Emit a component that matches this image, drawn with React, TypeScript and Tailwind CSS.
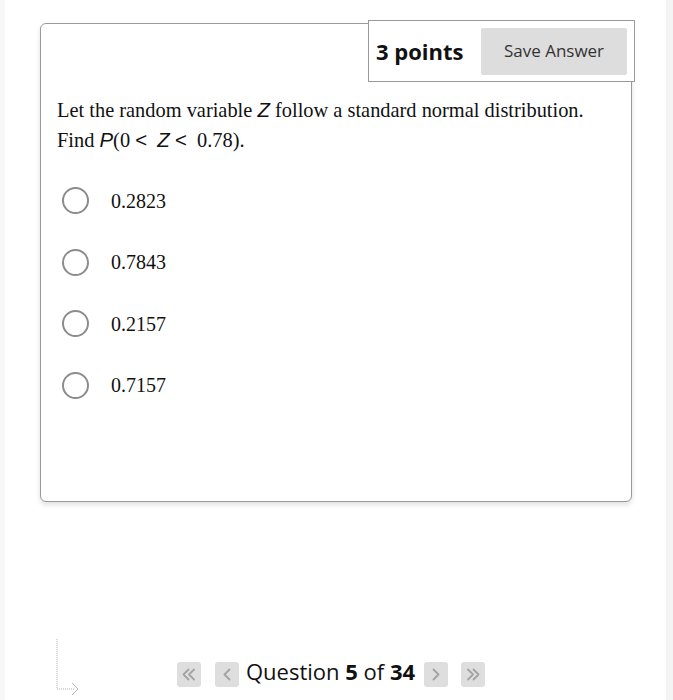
import React from "react";

const options = ["0.2823", "0.7843", "0.2157", "0.7157"];

const NavButton = ({ d }: { d: string }) => (
  <button className="flex h-[25px] w-[24px] items-center justify-center rounded-[3px] bg-[#dedede]">
    <svg width="24" height="25" viewBox="0 0 24 25">
      <path d={d} fill="none" stroke="#a3a3a3" strokeWidth="1.8" strokeLinecap="round" strokeLinejoin="round" />
    </svg>
  </button>
);

export default function App() {
  return (
    <div className="flex h-[700px] w-[673px] bg-white">
      <div className="w-[5px] bg-[#f8f8f8]" />
      <div className="relative flex w-[661px] flex-col">
        <div className="relative ml-[35px] mt-[23px] h-[479px] w-[592px] rounded-[6px] border border-[#9a9a9a] bg-white shadow-[0_3px_5px_rgba(0,0,0,0.12)]">
          <div className="absolute right-[-4px] top-[-4px] flex h-[62px] w-[267px] items-center border border-[#9a9a9a] bg-white pl-[7px] pr-[7px]">
            <span className="flex-1 font-['Open_Sans'] text-[22px] font-bold text-[#111]">
              3 points
            </span>
            <button className="h-[47px] w-[146px] rounded-[2px] bg-[#dddddd] font-['Open_Sans'] text-[17px] text-[#333]">
              Save Answer
            </button>
          </div>
          <div className="px-[16px] pt-[71px] font-['Liberation_Serif'] text-[20.4px] leading-[30px] text-[#111]">
            <p>
              Let the random variable{" "}
              <span className="font-['Liberation_Sans'] italic">Z</span> follow a
              standard normal distribution.
            </p>
            <p>
              Find <span className="font-['Liberation_Sans'] italic">P</span>(0{" "}
              <span className="font-['Liberation_Sans']">&lt;</span>{"\u00a0 "}
              <span className="font-['Liberation_Sans'] italic">Z</span>{" "}
              <span className="font-['Liberation_Sans']">&lt;</span>{"\u00a0 "}0.78).
            </p>
          </div>
          <div className="mt-[32px] flex flex-col gap-[34.5px] pl-[21px]">
            {options.map((o) => (
              <label key={o} className="flex h-[27px] items-center gap-[22px]">
                <span className="h-[27px] w-[27px] rounded-full border-2 border-[#8c8c8c] bg-white" />
                <span className="font-['Liberation_Serif'] text-[20px] text-[#111]">
                  {o}
                </span>
              </label>
            ))}
          </div>
        </div>
        <div className="mt-[136px] flex items-start">
          <svg
            width="30"
            height="62"
            viewBox="0 0 30 62"
            className="ml-[47px] mt-[0px]"
          >
            <path
              d="M5 1 V51 H23"
              fill="none"
              stroke="#b5b5b5"
              strokeWidth="1"
              strokeDasharray="1 1"
            />
            <path d="M20 45 L26 51 L20 57" fill="none" stroke="#b5b5b5" strokeWidth="1" />
          </svg>
          <div className="ml-[95px] mt-[23px] flex items-center gap-[9px]">
            <div className="flex items-center gap-[14px]">
              <NavButton d="M11.5 7.5 L6.5 12.5 L11.5 17.5 M17 7.5 L12 12.5 L17 17.5" />
              <NavButton d="M14.5 7.5 L9.5 12.5 L14.5 17.5" />
            </div>
            <span className="mt-[-6px] ml-[-2px] font-['Open_Sans'] text-[22px] text-[#111]">
              Question <b>5</b> of <b>34</b>
            </span>
            <div className="flex items-center gap-[13px]">
              <NavButton d="M9.5 7.5 L14.5 12.5 L9.5 17.5" />
              <NavButton d="M7 7.5 L12 12.5 L7 17.5 M12.5 7.5 L17.5 12.5 L12.5 17.5" />
            </div>
          </div>
        </div>
      </div>
      <div className="w-[7px] bg-[#f4f4f4]" />
    </div>
  );
}
